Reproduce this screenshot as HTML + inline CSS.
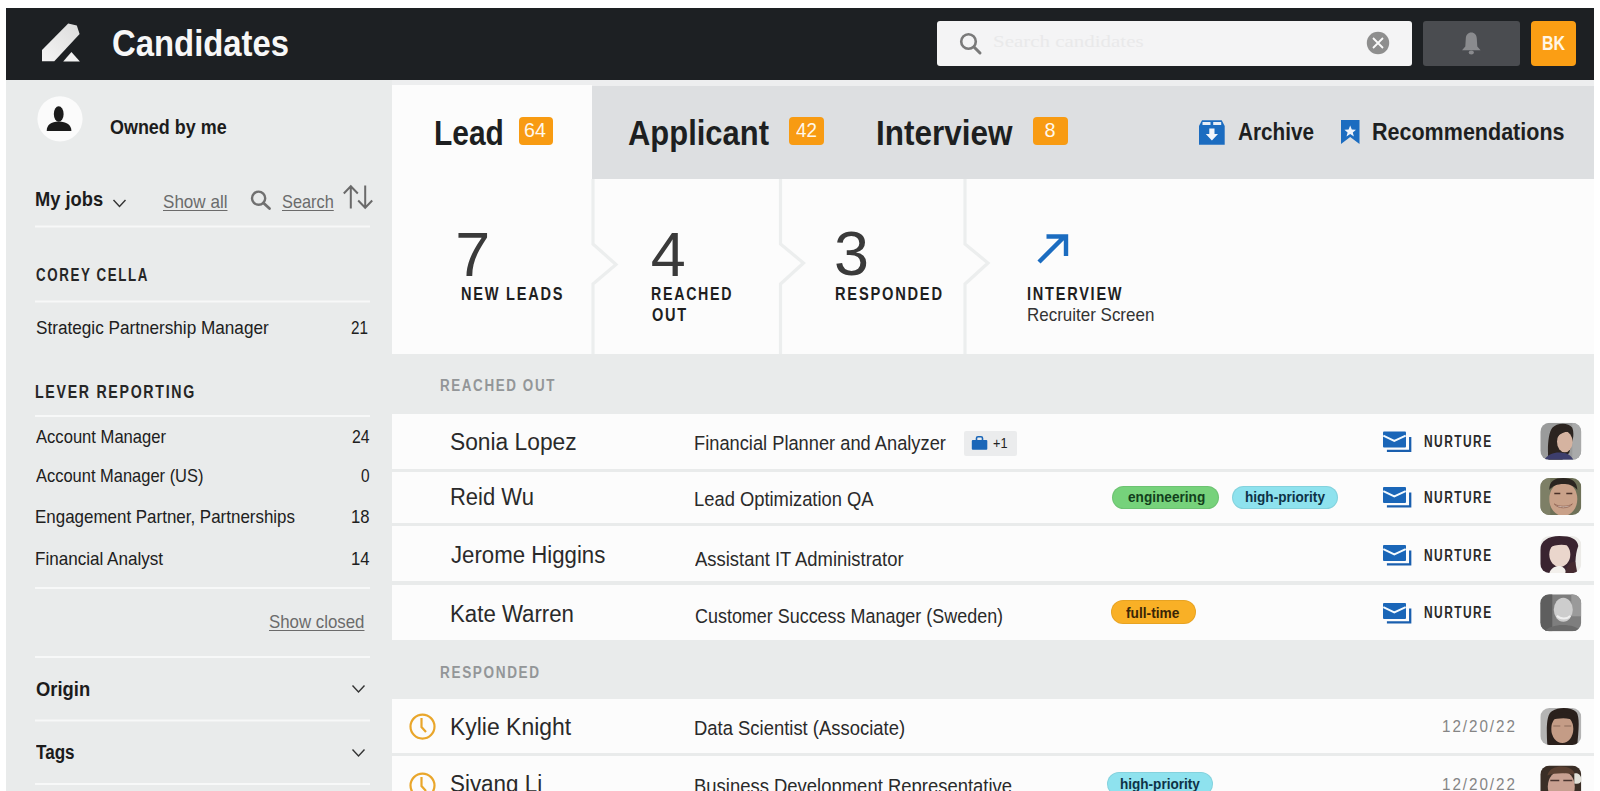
<!DOCTYPE html>
<html><head><meta charset="utf-8">
<style>
html,body{margin:0;padding:0;}
body{width:1600px;height:791px;overflow:hidden;background:#ffffff;position:relative;font-family:"Liberation Sans",sans-serif;}
.a{position:absolute;}
.t{position:absolute;white-space:nowrap;}
svg{position:absolute;overflow:visible;}
</style></head><body>
<!-- header -->
<div class="a" style="left:6px;top:8px;width:1588px;height:72px;background:#1d2023;"></div>
<svg style="left:0;top:0" width="100" height="80" viewBox="0 0 100 80">
  <defs><linearGradient id="pg" x1="0" y1="1" x2="1" y2="0"><stop offset="0" stop-color="#f4f4f4"/><stop offset="1" stop-color="#dcdcdc"/></linearGradient></defs>
  <polygon points="42,61.3 42,49.9 68.2,23.4 76.8,25.6 79.6,34.1 54.3,61.3" fill="url(#pg)"/>
  <polygon points="71.4,52.1 63.2,61.6 79.9,61.6" fill="#f2f2f2"/>
</svg>
<div class="a" style="left:937px;top:21px;width:474.5px;height:44.8px;background:#f4f4f5;border-radius:3px;"></div>
<svg style="left:0;top:0" width="1600" height="80">
  <circle cx="968.5" cy="41.5" r="7.3" fill="none" stroke="#7a7a7a" stroke-width="2.6"/>
  <line x1="974" y1="47" x2="980" y2="53" stroke="#7a7a7a" stroke-width="3" stroke-linecap="round"/>
  <circle cx="1378" cy="43" r="11.2" fill="#8e8e8e"/>
  <path d="M1373 38 L1383 48 M1383 38 L1373 48" stroke="#fafafa" stroke-width="1.8"/>
</svg>
<div class="a" style="left:1423px;top:21px;width:97px;height:45px;background:#4a4c50;border-radius:3px;"></div>
<svg style="left:0;top:0" width="1600" height="80">
  <path d="M1471.3 32.5 C1468 32.5 1466 35 1465.8 38.5 L1465.3 46.5 L1462 50.3 L1480.6 50.3 L1477.3 46.5 L1476.8 38.5 C1476.6 35 1474.6 32.5 1471.3 32.5 Z" fill="#8a8b8e"/>
  <ellipse cx="1471.3" cy="52.4" rx="2.6" ry="2" fill="#8a8b8e"/>
</svg>
<div class="a" style="left:1531px;top:21px;width:45px;height:45px;background:#fb9e14;border-radius:4px;"></div>

<!-- sidebar -->
<div class="a" style="left:6px;top:80px;width:386px;height:711px;background:#e9ebeb;"></div>
<svg style="left:0;top:0" width="400" height="791">
  <circle cx="60" cy="118.8" r="22.6" fill="#fbfbfb"/>
  <ellipse cx="58.7" cy="114" rx="4.9" ry="7.8" fill="#1b1b1b"/>
  <path d="M46.7 131 C46.7 125 51 121.5 58.7 121.5 C66.5 121.5 71.4 125 71.4 131 Z" fill="#1b1b1b"/>
  <path d="M113.5 200 L119.5 206.5 L125.5 200" fill="none" stroke="#333" stroke-width="1.4"/>
  <circle cx="258.6" cy="198.2" r="6.6" fill="none" stroke="#707070" stroke-width="2.4"/>
  <line x1="263.5" y1="203" x2="269.5" y2="208.5" stroke="#707070" stroke-width="2.8" stroke-linecap="round"/>
  <path d="M350.8 208.5 V186.5 M343.8 193.5 L350.8 186.3 L357.8 193.5" fill="none" stroke="#6a6a6a" stroke-width="2"/>
  <path d="M365.2 185.5 V207.5 M358.2 200.5 L365.2 207.7 L372.2 200.5" fill="none" stroke="#6a6a6a" stroke-width="2"/>
  <g fill="#f7f8f8">
    <rect x="35" y="225.5" width="335" height="2"/>
    <rect x="35" y="300.5" width="335" height="2"/>
    <rect x="35" y="415" width="335" height="2"/>
    <rect x="35" y="587" width="335" height="2"/>
    <rect x="35" y="656" width="335" height="2"/>
    <rect x="35" y="719.5" width="335" height="2"/>
    <rect x="35" y="783" width="335" height="2"/>
  </g>
  <path d="M352.5 685.5 L358.5 692 L364.5 685.5" fill="none" stroke="#333" stroke-width="1.4"/>
  <path d="M352.5 749.5 L358.5 756 L364.5 749.5" fill="none" stroke="#333" stroke-width="1.4"/>
</svg>

<!-- main -->
<div class="a" style="left:392px;top:80px;width:1202px;height:711px;background:#e9ebeb;"></div>
<div class="a" style="left:392px;top:80px;width:1202px;height:6px;background:#edeeef;"></div>
<div class="a" style="left:392px;top:86px;width:1202px;height:92.8px;background:#dddfe1;"></div>
<div class="a" style="left:392px;top:85px;width:200px;height:95px;background:#fcfcfc;"></div>
<div class="a" style="left:392px;top:178.8px;width:1202px;height:175.2px;background:#fcfcfc;"></div>
<!-- badges -->
<div class="a" style="left:518.5px;top:116.5px;width:34.5px;height:28.5px;background:#f89b12;border-radius:4px;"></div>
<div class="a" style="left:789px;top:116.5px;width:35px;height:28.5px;background:#f89b12;border-radius:4px;"></div>
<div class="a" style="left:1032.5px;top:116.8px;width:35px;height:28.2px;background:#f89b12;border-radius:4px;"></div>
<svg style="left:0;top:0" width="1600" height="360">
  <!-- archive icon -->
  <path d="M1199 126 L1202 120.2 L1221.7 120.2 L1224.7 126 V144.7 H1199 Z" fill="#1b6cc0"/>
  <rect x="1202.5" y="122" width="8" height="3" fill="#e8eef6"/>
  <rect x="1213.2" y="122" width="8" height="3" fill="#e8eef6"/>
  <path d="M1209.3 128.5 H1214.5 V134 H1218 L1211.9 140.5 L1205.8 134 H1209.3 Z" fill="#f2f5fa"/>
  <!-- bookmark -->
  <path d="M1341 120 H1359.5 V144 L1350.2 137 L1341 144 Z" fill="#1b6cc0"/>
  <path d="M1350.2 125.5 L1351.8 129.6 L1356 129.8 L1352.8 132.4 L1353.9 136.5 L1350.2 134.1 L1346.5 136.5 L1347.6 132.4 L1344.4 129.8 L1348.6 129.6 Z" fill="#eef3fa"/>
  <!-- pipeline separators -->
  <g fill="none" stroke="#eceeee" stroke-width="3.2">
    <path d="M593 179 V244 L616 264.5 L593 284 V354"/>
    <path d="M780.5 179 V244 L803.5 263 L780.5 284 V354"/>
    <path d="M965 179 V244 L988 263 L965 284 V354"/>
  </g>
  <!-- arrow -->
  <path d="M1039 262 L1064.5 236.5 M1046.5 236.5 H1066 V256" fill="none" stroke="#1b6cc0" stroke-width="4.4"/>
</svg>

<!-- rows -->
<div class="a" style="left:392px;top:414px;width:1202px;height:54.5px;background:#fcfcfc;"></div>
<div class="a" style="left:392px;top:471.5px;width:1202px;height:51px;background:#fcfcfc;"></div>
<div class="a" style="left:392px;top:525.5px;width:1202px;height:55.5px;background:#fcfcfc;"></div>
<div class="a" style="left:392px;top:585px;width:1202px;height:54.5px;background:#fcfcfc;"></div>
<div class="a" style="left:392px;top:698.5px;width:1202px;height:54.5px;background:#fcfcfc;"></div>
<div class="a" style="left:392px;top:756px;width:1202px;height:40px;background:#fcfcfc;"></div>

<!-- chip +1 -->
<div class="a" style="left:964px;top:431.3px;width:53.3px;height:24.6px;background:#ebeced;border-radius:2px;"></div>
<svg style="left:0;top:0" width="1600" height="791">
  <path d="M976.5 440 V438.2 C976.5 437.4 977.2 436.8 978 436.8 H981 C981.8 436.8 982.5 437.4 982.5 438.2 V440" fill="none" stroke="#1a66b8" stroke-width="1.6"/>
  <rect x="971.8" y="440" width="15.5" height="9.8" rx="1" fill="#1a66b8"/>
</svg>
<!-- pills -->
<div class="a" style="left:1112.2px;top:485.7px;width:106.8px;height:23.6px;background:#76d27b;border-radius:12px;box-shadow:inset 0 0 0 1px rgba(0,0,0,0.07);"></div>
<div class="a" style="left:1231.75px;top:485.7px;width:106.5px;height:23.6px;background:#8ee2ee;border-radius:12px;box-shadow:inset 0 0 0 1px rgba(0,0,0,0.07);"></div>
<div class="a" style="left:1111.25px;top:600.4px;width:84.4px;height:23.9px;background:#f9b026;border-radius:12px;box-shadow:inset 0 0 0 1px rgba(0,0,0,0.07);"></div>
<div class="a" style="left:1106.6px;top:772.4px;width:106.4px;height:23.6px;background:#8ee2ee;border-radius:12px;box-shadow:inset 0 0 0 1px rgba(0,0,0,0.07);"></div>

<svg style="left:0;top:0" width="1600" height="791">
  <defs>
    <g id="mail">
      <path d="M4 6.5 H29 V20.5 M29 20.5 H4" fill="none" stroke="#1a66b8" stroke-width="2.4"/>
      <rect x="0" y="0" width="23" height="16" rx="1" fill="#1a66b8"/>
      <path d="M0.5 2 L11.5 9 L22.5 2" fill="none" stroke="#ffffff" stroke-width="1.6"/>
    </g>
    <clipPath id="av"><rect x="0" y="0" width="41" height="37" rx="9"/></clipPath>
  </defs>
  <g transform="translate(1383,431.5)">
    <rect x="0" y="0" width="23" height="16" rx="1" fill="#1a66b8"/>
    <path d="M0.3 4.1 L11.3 9.4 L22.7 4.1" fill="none" stroke="#f4fbff" stroke-width="1.9"/>
    <path d="M27.2 5.6 V19.3 H3.9" fill="none" stroke="#1a5fae" stroke-width="2.3"/>
  </g>
  <g transform="translate(1383,487)">
    <rect x="0" y="0" width="23" height="16" rx="1" fill="#1a66b8"/>
    <path d="M0.3 4.1 L11.3 9.4 L22.7 4.1" fill="none" stroke="#f4fbff" stroke-width="1.9"/>
    <path d="M27.2 5.6 V19.3 H3.9" fill="none" stroke="#1a5fae" stroke-width="2.3"/>
  </g>
  <g transform="translate(1383,545)">
    <rect x="0" y="0" width="23" height="16" rx="1" fill="#1a66b8"/>
    <path d="M0.3 4.1 L11.3 9.4 L22.7 4.1" fill="none" stroke="#f4fbff" stroke-width="1.9"/>
    <path d="M27.2 5.6 V19.3 H3.9" fill="none" stroke="#1a5fae" stroke-width="2.3"/>
  </g>
  <g transform="translate(1383,603)">
    <rect x="0" y="0" width="23" height="16" rx="1" fill="#1a66b8"/>
    <path d="M0.3 4.1 L11.3 9.4 L22.7 4.1" fill="none" stroke="#f4fbff" stroke-width="1.9"/>
    <path d="M27.2 5.6 V19.3 H3.9" fill="none" stroke="#1a5fae" stroke-width="2.3"/>
  </g>
  <!-- clocks -->
  <g fill="none" stroke="#e9a62b" stroke-width="2.2">
    <circle cx="422.5" cy="726.6" r="12"/>
    <path d="M421.5 718 V727 L426 732"/>
    <circle cx="422.5" cy="785.6" r="12"/>
    <path d="M421.5 777 V786 L426 791"/>
  </g>
  <!-- avatars -->
  <g transform="translate(1540.3,422.8)" clip-path="url(#av)">
    <rect width="41" height="37" fill="#9a9b9b"/>
    <rect x="32" y="0" width="9" height="37" fill="#a9aaaa"/>
    <path d="M8 37 C7 24 8 10 12 5 C16 0 28 -1 32 5 C34 10 33 16 31 22 L29 30 L22 37 Z" fill="#2c2420"/>
    <ellipse cx="24.5" cy="19" rx="7.8" ry="10.5" fill="#d5b3a0"/>
    <path d="M15 8 C19 3 29 3 32 10 C28 8 22 9 17 14 Z" fill="#2c2420"/>
    <path d="M4 37 C8 31 15 29 22 30 C27 30 31 33 33 37 Z" fill="#3d3e6c"/>
  </g>
  <g transform="translate(1540.3,478)" clip-path="url(#av)">
    <rect width="41" height="37" fill="#6e7158"/>
    <rect x="0" y="0" width="10" height="37" fill="#7d7f66"/>
    <ellipse cx="23" cy="21" rx="14" ry="17" fill="#c9a189"/>
    <path d="M9 12 C9 3 14 0 23 0 C32 0 37 4 37 12 C33 7 28 6 23 6 C17 6 12 8 9 12 Z" fill="#2a2420"/>
    <path d="M14 26 C18 31 28 31 32 26 C28 29 18 29 14 26 Z" fill="#f4efe9" stroke="#8a5a4a" stroke-width="0.8"/>
    <path d="M14 15.5 H20 M26 15.5 H32" stroke="#4a3028" stroke-width="1.4"/>
  </g>
  <g transform="translate(1540.3,536)" clip-path="url(#av)">
    <rect width="41" height="37" fill="#ecebe8"/>
    <path d="M0 37 V14 C0 5 8 0 19 0 C31 0 37 3 38 10 C34 20 36 30 34 37 Z" fill="#3a2430"/>
    <ellipse cx="19.5" cy="18.5" rx="10.5" ry="12.5" fill="#ead6cc"/>
    <path d="M9 12 C10 5 15 3 20 3 C26 3 30 6 31 11 C26 8 15 8 9 12 Z" fill="#3a2430"/>
    <path d="M9 37 C11 31 16 30 19 30 C22 30 25 32 26 37 Z" fill="#f3f0ec"/>
    <path d="M25 37 C26 30 30 25 35 26 L37 37 Z" fill="#452a30"/>
  </g>
  <g transform="translate(1540.3,594.3)" clip-path="url(#av)">
    <rect width="41" height="37" fill="#7e7e7e"/>
    <rect x="0" y="0" width="12" height="37" fill="#5e5e5e"/>
    <rect x="31" y="0" width="10" height="22" fill="#9a9a9a"/>
    <ellipse cx="23" cy="15.5" rx="9.5" ry="12" fill="#cdcdcd"/>
    <path d="M16.5 21.5 C20 25 27 25 30 21.5" stroke="#efefef" stroke-width="2" fill="none"/>
    <path d="M4 37 C10 29 34 28 41 37 Z" fill="#6a6a6a"/>
  </g>
  <g transform="translate(1540.3,708)" clip-path="url(#av)">
    <rect width="41" height="37" fill="#b4b4b4"/>
    <path d="M7 37 C6 20 6 6 12 3 C18 -1 31 -1 36 4 C40 9 38 25 37 37 Z" fill="#2a201c"/>
    <ellipse cx="22" cy="21" rx="11" ry="14" fill="#c49c86"/>
    <path d="M11 12 C13 5 20 4 25 4 C31 4 34 7 35 13 C28 9 18 10 11 12 Z" fill="#2a201c"/>
    <path d="M13 18 H20 M24 18 H31" stroke="#8a6a5a" stroke-width="1"/>
  </g>
  <g transform="translate(1540.3,765.5)" clip-path="url(#av)">
    <rect width="41" height="37" fill="#3a2e26"/>
    <ellipse cx="21" cy="21" rx="13.5" ry="16" fill="#c8a091"/>
    <path d="M7 10 C9 3 15 1 21 1 C28 1 34 4 35 10 C30 7 14 7 7 10 Z" fill="#5a4032"/>
    <path d="M34 8 C38 7 41 10 41 14 C41 18 38 19 34 18 Z" fill="#e2e2da"/>
    <path d="M10 15 H19 M23 15 H32" stroke="#4a3530" stroke-width="1.6"/>
  </g>
</svg>
<div class="t" style="left:112.10px;top:26.24px;font-size:36.57px;line-height:36.57px;font-weight:700;color:#f7f7f7;letter-spacing:0.000px;font-family:'Liberation Sans', sans-serif;transform:scaleX(0.8986);transform-origin:0 0;">Candidates</div>
<div class="t" style="left:993.38px;top:33.29px;font-size:17.14px;line-height:17.14px;font-weight:400;color:#e9e9ea;letter-spacing:0.000px;font-family:'Liberation Serif', serif;transform:scaleX(1.2231);transform-origin:0 0;">Search candidates</div>
<div class="t" style="left:1542.20px;top:32.87px;font-size:20.0px;line-height:20.0px;font-weight:700;color:#fff6e6;letter-spacing:0.000px;font-family:'Liberation Sans', sans-serif;transform:scaleX(0.7981);transform-origin:0 0;">BK</div>
<div class="t" style="left:109.50px;top:116.82px;font-size:20.0px;line-height:20.0px;font-weight:700;color:#1c1c1c;letter-spacing:0.000px;font-family:'Liberation Sans', sans-serif;transform:scaleX(0.8968);transform-origin:0 0;">Owned by me</div>
<div class="t" style="left:35.05px;top:189.67px;font-size:19.29px;line-height:19.29px;font-weight:700;color:#1c1c1c;letter-spacing:0.000px;font-family:'Liberation Sans', sans-serif;transform:scaleX(0.9493);transform-origin:0 0;">My jobs</div>
<div class="t" style="left:163.40px;top:193.08px;font-size:18.21px;line-height:18.21px;font-weight:400;color:#6b6b6b;letter-spacing:0.000px;font-family:'Liberation Sans', sans-serif;transform:scaleX(0.9379);transform-origin:0 0;text-decoration:underline;text-underline-offset:2px;">Show all</div>
<div class="t" style="left:282.00px;top:193.08px;font-size:18.21px;line-height:18.21px;font-weight:400;color:#6b6b6b;letter-spacing:0.000px;font-family:'Liberation Sans', sans-serif;transform:scaleX(0.8981);transform-origin:0 0;text-decoration:underline;text-underline-offset:2px;">Search</div>
<div class="t" style="left:35.75px;top:266.88px;font-size:17.86px;line-height:17.86px;font-weight:700;color:#262626;letter-spacing:2.143px;font-family:'Liberation Sans', sans-serif;transform:scaleX(0.7473);transform-origin:0 0;">COREY CELLA</div>
<div class="t" style="left:36.00px;top:319.88px;font-size:17.86px;line-height:17.86px;font-weight:400;color:#202020;letter-spacing:0.000px;font-family:'Liberation Sans', sans-serif;transform:scaleX(0.9607);transform-origin:0 0;">Strategic Partnership Manager</div>
<div class="t" style="left:351.00px;top:319.88px;font-size:17.86px;line-height:17.86px;font-weight:400;color:#202020;letter-spacing:0.000px;font-family:'Liberation Sans', sans-serif;transform:scaleX(0.8529);transform-origin:0 0;">21</div>
<div class="t" style="left:35.21px;top:384.28px;font-size:17.86px;line-height:17.86px;font-weight:700;color:#262626;letter-spacing:2.143px;font-family:'Liberation Sans', sans-serif;transform:scaleX(0.7936);transform-origin:0 0;">LEVER REPORTING</div>
<div class="t" style="left:36.00px;top:428.33px;font-size:18.21px;line-height:18.21px;font-weight:400;color:#202020;letter-spacing:0.000px;font-family:'Liberation Sans', sans-serif;transform:scaleX(0.9123);transform-origin:0 0;">Account Manager</div>
<div class="t" style="left:352.00px;top:428.33px;font-size:18.21px;line-height:18.21px;font-weight:400;color:#202020;letter-spacing:0.000px;font-family:'Liberation Sans', sans-serif;transform:scaleX(0.8700);transform-origin:0 0;">24</div>
<div class="t" style="left:36.00px;top:467.08px;font-size:18.21px;line-height:18.21px;font-weight:400;color:#202020;letter-spacing:0.000px;font-family:'Liberation Sans', sans-serif;transform:scaleX(0.9053);transform-origin:0 0;">Account Manager (US)</div>
<div class="t" style="left:361.00px;top:467.08px;font-size:18.21px;line-height:18.21px;font-weight:400;color:#202020;letter-spacing:0.000px;font-family:'Liberation Sans', sans-serif;transform:scaleX(0.8500);transform-origin:0 0;">0</div>
<div class="t" style="left:35.07px;top:508.33px;font-size:18.21px;line-height:18.21px;font-weight:400;color:#202020;letter-spacing:0.000px;font-family:'Liberation Sans', sans-serif;transform:scaleX(0.9318);transform-origin:0 0;">Engagement Partner, Partnerships</div>
<div class="t" style="left:351.08px;top:508.33px;font-size:18.21px;line-height:18.21px;font-weight:400;color:#202020;letter-spacing:0.000px;font-family:'Liberation Sans', sans-serif;transform:scaleX(0.9155);transform-origin:0 0;">18</div>
<div class="t" style="left:35.06px;top:549.58px;font-size:18.21px;line-height:18.21px;font-weight:400;color:#202020;letter-spacing:0.000px;font-family:'Liberation Sans', sans-serif;transform:scaleX(0.9382);transform-origin:0 0;">Financial Analyst</div>
<div class="t" style="left:351.08px;top:549.58px;font-size:18.21px;line-height:18.21px;font-weight:400;color:#202020;letter-spacing:0.000px;font-family:'Liberation Sans', sans-serif;transform:scaleX(0.9155);transform-origin:0 0;">14</div>
<div class="t" style="left:269.40px;top:614.28px;font-size:17.86px;line-height:17.86px;font-weight:400;color:#6b6b6b;letter-spacing:0.000px;font-family:'Liberation Sans', sans-serif;transform:scaleX(0.9429);transform-origin:0 0;text-decoration:underline;text-underline-offset:2px;">Show closed</div>
<div class="t" style="left:36.00px;top:678.57px;font-size:20.0px;line-height:20.0px;font-weight:700;color:#1c1c1c;letter-spacing:0.000px;font-family:'Liberation Sans', sans-serif;transform:scaleX(0.9190);transform-origin:0 0;">Origin</div>
<div class="t" style="left:36.00px;top:742.07px;font-size:20.0px;line-height:20.0px;font-weight:700;color:#1c1c1c;letter-spacing:0.000px;font-family:'Liberation Sans', sans-serif;transform:scaleX(0.8542);transform-origin:0 0;">Tags</div>
<div class="t" style="left:433.85px;top:116.27px;font-size:34.29px;line-height:34.29px;font-weight:700;color:#1d1f21;letter-spacing:0.000px;font-family:'Liberation Sans', sans-serif;transform:scaleX(0.8729);transform-origin:0 0;">Lead</div>
<div class="t" style="left:628.40px;top:115.97px;font-size:34.29px;line-height:34.29px;font-weight:700;color:#1d1f21;letter-spacing:0.000px;font-family:'Liberation Sans', sans-serif;transform:scaleX(0.9027);transform-origin:0 0;">Applicant</div>
<div class="t" style="left:876.16px;top:115.67px;font-size:34.29px;line-height:34.29px;font-weight:700;color:#1d1f21;letter-spacing:0.000px;font-family:'Liberation Sans', sans-serif;transform:scaleX(0.9187);transform-origin:0 0;">Interview</div>
<div class="t" style="left:524.21px;top:120.74px;font-size:19.86px;line-height:19.86px;font-weight:400;color:#fff8ec;letter-spacing:0.000px;font-family:'Liberation Sans', sans-serif;transform:scaleX(0.9931);transform-origin:0 0;">64</div>
<div class="t" style="left:795.60px;top:120.74px;font-size:19.86px;line-height:19.86px;font-weight:400;color:#fff8ec;letter-spacing:0.000px;font-family:'Liberation Sans', sans-serif;transform:scaleX(0.9481);transform-origin:0 0;">42</div>
<div class="t" style="left:1044.50px;top:120.74px;font-size:19.86px;line-height:19.86px;font-weight:400;color:#fff8ec;letter-spacing:0.000px;font-family:'Liberation Sans', sans-serif;">8</div>
<div class="t" style="left:1237.50px;top:120.65px;font-size:23.57px;line-height:23.57px;font-weight:700;color:#1d1f21;letter-spacing:0.000px;font-family:'Liberation Sans', sans-serif;transform:scaleX(0.8791);transform-origin:0 0;">Archive</div>
<div class="t" style="left:1371.59px;top:120.65px;font-size:23.57px;line-height:23.57px;font-weight:700;color:#1d1f21;letter-spacing:0.000px;font-family:'Liberation Sans', sans-serif;transform:scaleX(0.9132);transform-origin:0 0;">Recommendations</div>
<div class="t" style="left:455.30px;top:222.98px;font-size:62.86px;line-height:62.86px;font-weight:400;color:#3a3a3a;letter-spacing:0.000px;font-family:'Liberation Sans', sans-serif;">7</div>
<div class="t" style="left:650.70px;top:222.98px;font-size:62.86px;line-height:62.86px;font-weight:400;color:#3a3a3a;letter-spacing:0.000px;font-family:'Liberation Sans', sans-serif;">4</div>
<div class="t" style="left:833.90px;top:222.18px;font-size:62.86px;line-height:62.86px;font-weight:400;color:#3a3a3a;letter-spacing:0.000px;font-family:'Liberation Sans', sans-serif;">3</div>
<div class="t" style="left:460.60px;top:285.34px;font-size:18.14px;line-height:18.14px;font-weight:700;color:#1f1f1f;letter-spacing:2.177px;font-family:'Liberation Sans', sans-serif;transform:scaleX(0.8043);transform-origin:0 0;">NEW LEADS</div>
<div class="t" style="left:650.92px;top:285.34px;font-size:18.14px;line-height:18.14px;font-weight:700;color:#1f1f1f;letter-spacing:2.177px;font-family:'Liberation Sans', sans-serif;transform:scaleX(0.7845);transform-origin:0 0;">REACHED</div>
<div class="t" style="left:651.70px;top:306.34px;font-size:18.14px;line-height:18.14px;font-weight:700;color:#1f1f1f;letter-spacing:2.177px;font-family:'Liberation Sans', sans-serif;transform:scaleX(0.8039);transform-origin:0 0;">OUT</div>
<div class="t" style="left:835.09px;top:285.04px;font-size:18.14px;line-height:18.14px;font-weight:700;color:#1f1f1f;letter-spacing:2.177px;font-family:'Liberation Sans', sans-serif;transform:scaleX(0.8091);transform-origin:0 0;">RESPONDED</div>
<div class="t" style="left:1026.70px;top:285.04px;font-size:18.14px;line-height:18.14px;font-weight:700;color:#1f1f1f;letter-spacing:2.177px;font-family:'Liberation Sans', sans-serif;transform:scaleX(0.8030);transform-origin:0 0;">INTERVIEW</div>
<div class="t" style="left:1026.55px;top:306.78px;font-size:17.86px;line-height:17.86px;font-weight:400;color:#333333;letter-spacing:0.000px;font-family:'Liberation Sans', sans-serif;transform:scaleX(0.9503);transform-origin:0 0;">Recruiter Screen</div>
<div class="t" style="left:439.72px;top:377.24px;font-size:17.14px;line-height:17.14px;font-weight:700;color:#939698;letter-spacing:2.057px;font-family:'Liberation Sans', sans-serif;transform:scaleX(0.7824);transform-origin:0 0;">REACHED OUT</div>
<div class="t" style="left:440.21px;top:663.89px;font-size:17.14px;line-height:17.14px;font-weight:700;color:#939698;letter-spacing:2.057px;font-family:'Liberation Sans', sans-serif;transform:scaleX(0.7931);transform-origin:0 0;">RESPONDED</div>
<div class="t" style="left:450.03px;top:431.05px;font-size:23.57px;line-height:23.57px;font-weight:400;color:#2a2a2a;letter-spacing:0.000px;font-family:'Liberation Sans', sans-serif;transform:scaleX(0.9665);transform-origin:0 0;">Sonia Lopez</div>
<div class="t" style="left:694.05px;top:433.67px;font-size:19.29px;line-height:19.29px;font-weight:400;color:#2a2a2a;letter-spacing:0.000px;font-family:'Liberation Sans', sans-serif;transform:scaleX(0.9476);transform-origin:0 0;">Financial Planner and Analyzer</div>
<div class="t" style="left:1424.24px;top:434.20px;font-size:15.71px;line-height:15.71px;font-weight:700;color:#2a2a2a;letter-spacing:1.886px;font-family:'Liberation Sans', sans-serif;transform:scaleX(0.7621);transform-origin:0 0;">NURTURE</div>
<div class="t" style="left:450.07px;top:486.05px;font-size:23.57px;line-height:23.57px;font-weight:400;color:#2a2a2a;letter-spacing:0.000px;font-family:'Liberation Sans', sans-serif;transform:scaleX(0.9326);transform-origin:0 0;">Reid Wu</div>
<div class="t" style="left:694.05px;top:489.92px;font-size:19.29px;line-height:19.29px;font-weight:400;color:#2a2a2a;letter-spacing:0.000px;font-family:'Liberation Sans', sans-serif;transform:scaleX(0.9520);transform-origin:0 0;">Lead Optimization QA</div>
<div class="t" style="left:1424.24px;top:489.50px;font-size:15.71px;line-height:15.71px;font-weight:700;color:#2a2a2a;letter-spacing:1.886px;font-family:'Liberation Sans', sans-serif;transform:scaleX(0.7621);transform-origin:0 0;">NURTURE</div>
<div class="t" style="left:451.00px;top:543.75px;font-size:23.57px;line-height:23.57px;font-weight:400;color:#2a2a2a;letter-spacing:0.000px;font-family:'Liberation Sans', sans-serif;transform:scaleX(0.9428);transform-origin:0 0;">Jerome Higgins</div>
<div class="t" style="left:695.00px;top:549.67px;font-size:19.29px;line-height:19.29px;font-weight:400;color:#2a2a2a;letter-spacing:0.000px;font-family:'Liberation Sans', sans-serif;transform:scaleX(0.9558);transform-origin:0 0;">Assistant IT Administrator</div>
<div class="t" style="left:1424.24px;top:547.50px;font-size:15.71px;line-height:15.71px;font-weight:700;color:#2a2a2a;letter-spacing:1.886px;font-family:'Liberation Sans', sans-serif;transform:scaleX(0.7621);transform-origin:0 0;">NURTURE</div>
<div class="t" style="left:450.06px;top:602.85px;font-size:23.57px;line-height:23.57px;font-weight:400;color:#2a2a2a;letter-spacing:0.000px;font-family:'Liberation Sans', sans-serif;transform:scaleX(0.9437);transform-origin:0 0;">Kate Warren</div>
<div class="t" style="left:695.00px;top:606.67px;font-size:19.29px;line-height:19.29px;font-weight:400;color:#2a2a2a;letter-spacing:0.000px;font-family:'Liberation Sans', sans-serif;transform:scaleX(0.9304);transform-origin:0 0;">Customer Success Manager (Sweden)</div>
<div class="t" style="left:1424.24px;top:605.30px;font-size:15.71px;line-height:15.71px;font-weight:700;color:#2a2a2a;letter-spacing:1.886px;font-family:'Liberation Sans', sans-serif;transform:scaleX(0.7621);transform-origin:0 0;">NURTURE</div>
<div class="t" style="left:993.40px;top:436.30px;font-size:14.29px;line-height:14.29px;font-weight:400;color:#222;letter-spacing:0.000px;font-family:'Liberation Sans', sans-serif;transform:scaleX(0.8874);transform-origin:0 0;">+1</div>
<div class="t" style="left:1127.50px;top:491.07px;font-size:13.8px;line-height:13.8px;font-weight:700;color:#123f1c;letter-spacing:0.000px;font-family:'Liberation Sans', sans-serif;transform:scaleX(0.9876);transform-origin:0 0;">engineering</div>
<div class="t" style="left:1245.25px;top:491.07px;font-size:13.8px;line-height:13.8px;font-weight:700;color:#0d3247;letter-spacing:0.000px;font-family:'Liberation Sans', sans-serif;transform:scaleX(0.9839);transform-origin:0 0;">high-priority</div>
<div class="t" style="left:1126.25px;top:606.82px;font-size:13.8px;line-height:13.8px;font-weight:700;color:#3a2506;letter-spacing:0.000px;font-family:'Liberation Sans', sans-serif;transform:scaleX(0.9939);transform-origin:0 0;">full-time</div>
<div class="t" style="left:450.03px;top:715.65px;font-size:23.57px;line-height:23.57px;font-weight:400;color:#2a2a2a;letter-spacing:0.000px;font-family:'Liberation Sans', sans-serif;transform:scaleX(0.9735);transform-origin:0 0;">Kylie Knight</div>
<div class="t" style="left:694.04px;top:719.07px;font-size:19.29px;line-height:19.29px;font-weight:400;color:#2a2a2a;letter-spacing:0.000px;font-family:'Liberation Sans', sans-serif;transform:scaleX(0.9561);transform-origin:0 0;">Data Scientist (Associate)</div>
<div class="t" style="left:1441.51px;top:718.19px;font-size:17.14px;line-height:17.14px;font-weight:400;color:#858585;letter-spacing:2.200px;font-family:'Liberation Sans', sans-serif;transform:scaleX(0.8878);transform-origin:0 0;">12/20/22</div>
<div class="t" style="left:450.05px;top:773.45px;font-size:23.57px;line-height:23.57px;font-weight:400;color:#2a2a2a;letter-spacing:0.000px;font-family:'Liberation Sans', sans-serif;transform:scaleX(0.9504);transform-origin:0 0;">Siyang Li</div>
<div class="t" style="left:694.04px;top:776.87px;font-size:19.29px;line-height:19.29px;font-weight:400;color:#2a2a2a;letter-spacing:0.000px;font-family:'Liberation Sans', sans-serif;transform:scaleX(0.9573);transform-origin:0 0;">Business Development Representative</div>
<div class="t" style="left:1120.10px;top:777.72px;font-size:13.8px;line-height:13.8px;font-weight:700;color:#0d3247;letter-spacing:0.000px;font-family:'Liberation Sans', sans-serif;transform:scaleX(0.9826);transform-origin:0 0;">high-priority</div>
<div class="t" style="left:1441.51px;top:775.79px;font-size:17.14px;line-height:17.14px;font-weight:400;color:#858585;letter-spacing:2.200px;font-family:'Liberation Sans', sans-serif;transform:scaleX(0.8878);transform-origin:0 0;">12/20/22</div>
</body></html>
